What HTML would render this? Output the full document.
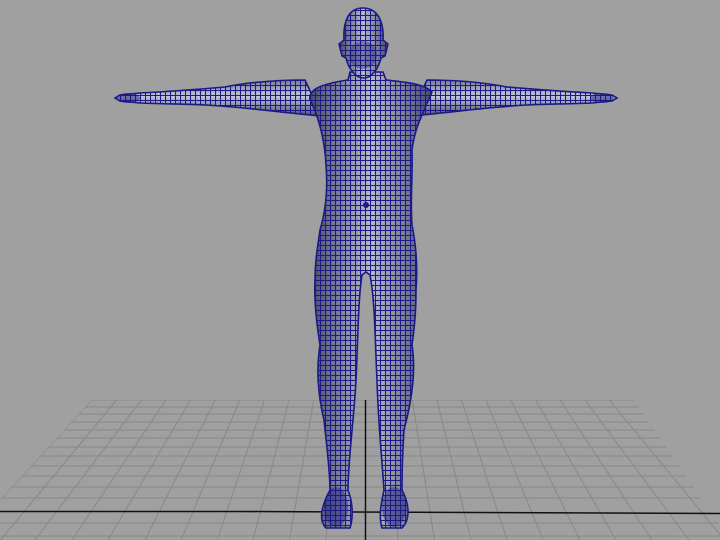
<!DOCTYPE html>
<html><head><meta charset="utf-8"><style>html,body{margin:0;padding:0;background:#a0a0a0;}svg{display:block}</style></head>
<body>
<svg width="720" height="540" viewBox="0 0 720 540" xmlns="http://www.w3.org/2000/svg">
<defs>
<clipPath id="fl"><polygon points="92,400 634,400 730,540 -37,540"/></clipPath>
<pattern id="mesh" width="5" height="5" patternUnits="userSpaceOnUse">
<path d="M0 0.5H5M0.5 0V5" stroke="#1a1a88" stroke-width="1.1"/>
</pattern>
<linearGradient id="sh" x1="0" x2="1" y1="0" y2="0">
<stop offset="0" stop-color="#4a4a68"/>
<stop offset="0.35" stop-color="#9898b0"/>
<stop offset="0.5" stop-color="#b8b8cc"/>
<stop offset="0.65" stop-color="#9898b0"/>
<stop offset="1" stop-color="#4a4a68"/>
</linearGradient>
<linearGradient id="arm" x1="0" x2="0" y1="0" y2="1">
<stop offset="0" stop-color="#7a7a96"/>
<stop offset="0.45" stop-color="#c4c4d6"/>
<stop offset="1" stop-color="#50506c"/>
</linearGradient>
</defs>
<rect width="720" height="540" fill="#a0a0a0"/>
<g clip-path="url(#fl)" stroke="#888" stroke-width="1" fill="none">
<path d="M0 400H720M0 407H720M0 414H720M0 422H720M0 430H720M0 438H720M0 447H720M0 456H720M0 466H720M0 476H720M0 487H720M0 498H720M0 523H720M0 536H720"/>
<path d="M92 400L-37 540M116.6 400L0.6 540M141.3 400L35 540M165.9 400L72 540M190.5 400L108 540M215.2 400L145 540M239.8 400L181 540M264.5 400L217 540M289 400L253 540M313.7 400L289.5 540M338.4 400L326 540M387.6 400L398 540M412.3 400L434.5 540M437 400L471 540M461.5 400L507 540M486 400L543 540M511 400L580 540M535.5 400L616 540M560 400L652 540M585 400L689 540M609.4 400L724.5 540M634 400L761 540"/>
</g>
<path d="M0 511.5H240L720 513.5" stroke="#111" stroke-width="1.5" fill="none"/>
<path d="M365.5 400V540" stroke="#111" stroke-width="1.5"/>
<g id="shapes" stroke="#1a1a86" stroke-width="1.6">
<path d="M305 80 C280 80 250 82 225 87 C190 90 160 92 140 93 L120 95 L115 98 L120 101 L140 103 C165 104 185 104 205 105 C245 107 285 113 322 116 Z" fill="url(#arm)"/>
<path d="M427 80 C452 80 482 82 507 87 C542 90 572 92 592 93 L612 95 L617 98 L612 101 L592 103 C567 104 547 104 527 105 C487 107 447 113 410 116 Z" fill="url(#arm)"/>
<path d="M350 72 L383 72 L386 80 C405 82 425 84 432 92 C425 110 415 125 412 150 C413 175 410 200 412 225 C416 245 418 265 416 290 C416 315 414 330 412 345 C416 370 412 400 404 430 C402 460 402 480 402 490 C410 505 410 520 402 528 L382 528 C378 515 382 500 384 490 C382 460 378 420 377 380 C375 340 375 300 370 275 L366 272 L362 275 C358 300 358 340 356 380 C354 420 348 460 348 490 C352 500 354 515 350 528 L326 528 C318 520 322 505 330 490 C330 470 326 440 324 420 C318 395 316 370 320 345 C316 320 314 300 315 280 C315 260 318 245 320 230 C326 210 328 190 326 165 C325 140 318 115 310 100 C308 90 320 84 348 80 Z" fill="url(#sh)"/>
<path d="M363 8 C378 8 384 22 383 40 L388 44 L385 56 L381 58 C378 70 371 78 364 78 C356 78 349 70 346 58 L342 56 L339 44 L344 40 C343 22 348 8 363 8 Z" fill="url(#sh)"/>
</g>
<g fill="url(#mesh)">
<path d="M305 80 C280 80 250 82 225 87 C190 90 160 92 140 93 L120 95 L115 98 L120 101 L140 103 C165 104 185 104 205 105 C245 107 285 113 322 116 Z"/>
<path d="M427 80 C452 80 482 82 507 87 C542 90 572 92 592 93 L612 95 L617 98 L612 101 L592 103 C567 104 547 104 527 105 C487 107 447 113 410 116 Z"/>
<path d="M350 72 L383 72 L386 80 C405 82 425 84 432 92 C425 110 415 125 412 150 C413 175 410 200 412 225 C416 245 418 265 416 290 C416 315 414 330 412 345 C416 370 412 400 404 430 C402 460 402 480 402 490 C410 505 410 520 402 528 L382 528 C378 515 382 500 384 490 C382 460 378 420 377 380 C375 340 375 300 370 275 L366 272 L362 275 C358 300 358 340 356 380 C354 420 348 460 348 490 C352 500 354 515 350 528 L326 528 C318 520 322 505 330 490 C330 470 326 440 324 420 C318 395 316 370 320 345 C316 320 314 300 315 280 C315 260 318 245 320 230 C326 210 328 190 326 165 C325 140 318 115 310 100 C308 90 320 84 348 80 Z"/>
<path d="M363 8 C378 8 384 22 383 40 L388 44 L385 56 L381 58 C378 70 371 78 364 78 C356 78 349 70 346 58 L342 56 L339 44 L344 40 C343 22 348 8 363 8 Z"/>
</g>
<g fill="#1a1a80">
<ellipse cx="363" cy="55" rx="14" ry="14" opacity="0.4"/>
<ellipse cx="336" cy="507" rx="12" ry="20" opacity="0.45"/>
<ellipse cx="394" cy="507" rx="12" ry="20" opacity="0.45"/>
<ellipse cx="128" cy="98" rx="12" ry="5" opacity="0.5"/>
<ellipse cx="602" cy="98" rx="12" ry="5" opacity="0.5"/>
<circle cx="366" cy="205" r="3"/>
</g>
</svg>
</body></html>
